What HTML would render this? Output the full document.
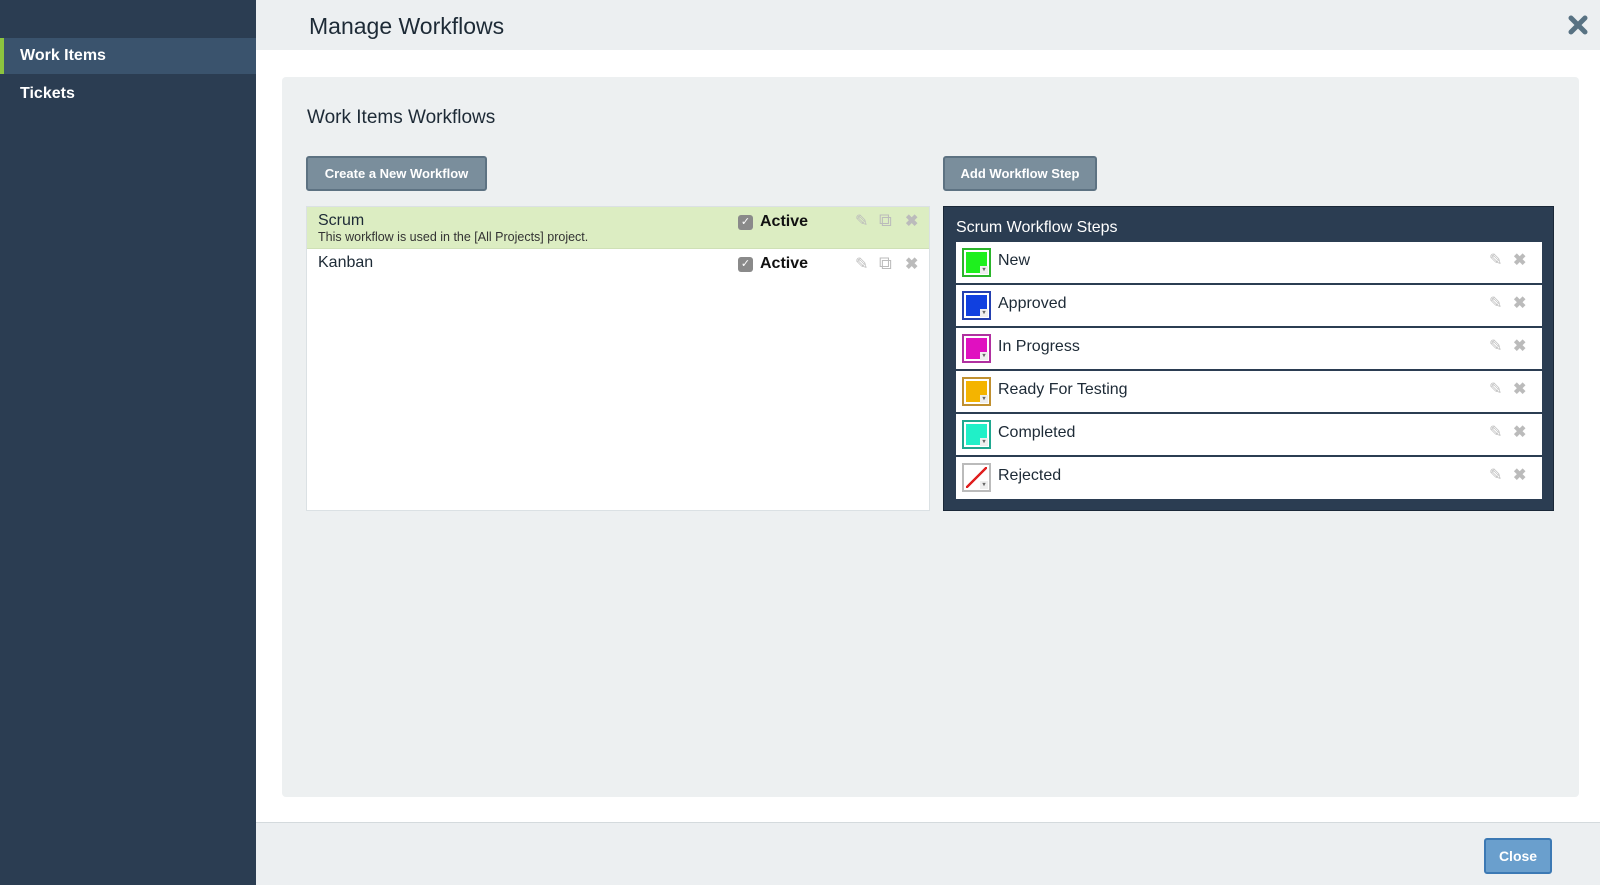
<!DOCTYPE html>
<html><head><meta charset="utf-8"><style>
*{box-sizing:border-box;margin:0;padding:0}
body{width:1600px;height:885px;overflow:hidden;font-family:"Liberation Sans",sans-serif;background:#fff;position:relative;color:#1d2a36}
.side{position:absolute;left:0;top:0;width:256px;height:885px;background:#2b3d52}
.side .it{position:absolute;left:0;width:256px;height:36px;line-height:36px;padding-left:20px;color:#fff;font-size:16px;font-weight:bold}
.side .act{background:#3a536d;border-left:4px solid #8cc43f;padding-left:16px}
.hdr{position:absolute;left:256px;top:0;width:1344px;height:50px;background:#eceff1}
.hdr h1{position:absolute;left:53px;top:13px;font-size:23px;font-weight:normal;color:#1d2a36}
.x{position:absolute;left:1568px;top:15px}
.panel{position:absolute;left:282px;top:77px;width:1297px;height:720px;background:#edf0f1;border-radius:4px}
.h2{position:absolute;left:307px;top:107px;font-size:19px;color:#1d2a36}
.btn{position:absolute;top:156px;height:35px;background:#7a8e9c;border:2px solid #5d7282;border-radius:3px;color:#fff;font-size:13px;font-weight:bold;text-align:center;line-height:31px}
.list{position:absolute;left:306px;top:206px;width:624px;height:305px;background:#fff;border:1px solid #dbe1e4}
.row{position:absolute;left:0;width:622px}
.row .n{position:absolute;left:11px;font-size:16px;color:#1d2a36}
.row .d{position:absolute;left:11px;top:23px;font-size:12.5px;color:#333}
.cb{position:absolute;left:431px;width:15px;height:15px;background:#8a8a8a;border-radius:3px;color:#fff;font-size:11px;line-height:15px;text-align:center}
.ac{position:absolute;left:453px;font-size:16px;font-weight:bold;color:#111}
.ic{position:absolute;color:#bbb;font-size:16px}
.dark{position:absolute;left:943px;top:206px;width:611px;height:305px;background:#2b3d52;border:1px solid #1a2838}
.dark .t{position:absolute;left:12px;top:12px;color:#fff;font-size:16px}
.step{position:absolute;left:12px;width:586px;height:42px;background:#fff;border-bottom:1px solid #2b3d52}
.sw{position:absolute;left:6px;top:6px;width:29px;height:29px;border:2px solid;padding:2px}
.sw i{display:block;width:100%;height:100%}
.sw b{position:absolute;right:1px;bottom:1px;width:8px;height:8px;background:#eee;font-size:6px;color:#666;line-height:8px;text-align:center}
.step .n{position:absolute;left:42px;top:10px;font-size:16px;color:#1d2a36}
.step .p{position:absolute;left:533px;top:8px;color:#bbb;font-size:16px}
.step .q{position:absolute;left:557px;top:8px;color:#bbb;font-size:16px;font-weight:bold}
.foot{position:absolute;left:256px;top:822px;width:1344px;height:63px;background:#eceff1;border-top:1px solid #d4dadd}
.close{position:absolute;left:1484px;top:838px;width:68px;height:36px;background:#6a9fcd;border:2px solid #3c79b4;border-radius:3px;color:#fff;font-weight:bold;font-size:14px;text-align:center;line-height:32px}
</style></head><body>
<div class="side">
<div class="it act" style="top:38px">Work Items</div>
<div class="it" style="top:76px">Tickets</div>
</div>
<div class="hdr"><h1>Manage Workflows</h1></div>
<svg class="x" width="20" height="20" viewBox="0 0 20 20"><path d="M3 3L17 17M17 3L3 17" stroke="#587283" stroke-width="5" stroke-linecap="round"/></svg>
<div class="panel"></div>
<div class="h2">Work Items Workflows</div>
<div class="btn" style="left:306px;width:181px">Create a New Workflow</div>
<div class="btn" style="left:943px;width:154px">Add Workflow Step</div>
<div class="list">
<div class="row" style="top:0;height:42px;background:#dcedc2;border-bottom:1px solid #cfe0b6">
<div class="n" style="top:5px">Scrum</div><div class="d">This workflow is used in the [All Projects] project.</div>
<div class="cb" style="top:8px">✓</div><div class="ac" style="top:6px">Active</div>
<div class="ic" style="left:548px;top:4px">✎</div><div class="ic" style="left:572px;top:3px;font-size:18px">⧉</div><div class="ic" style="left:598px;top:4px;font-weight:bold">✖</div>
</div>
<div class="row" style="top:42px;height:26px">
<div class="n" style="top:5px">Kanban</div>
<div class="cb" style="top:8px">✓</div><div class="ac" style="top:6px">Active</div>
<div class="ic" style="left:548px;top:5px">✎</div><div class="ic" style="left:572px;top:4px;font-size:18px">⧉</div><div class="ic" style="left:598px;top:5px;font-weight:bold">✖</div>
</div>
</div>
<div class="dark">
<div class="t">Scrum Workflow Steps</div>
<div class="step" style="top:35px"><div class="sw" style="border-color:#2bb52b"><i style="background:#1ef01e"></i><b>▾</b></div><div class="n">New</div><div class="p">✎</div><div class="q">✖</div></div>
<div class="step" style="top:78px"><div class="sw" style="border-color:#2440b0"><i style="background:#1040e0"></i><b>▾</b></div><div class="n">Approved</div><div class="p">✎</div><div class="q">✖</div></div>
<div class="step" style="top:121px"><div class="sw" style="border-color:#b030a0"><i style="background:#e010c0"></i><b>▾</b></div><div class="n">In Progress</div><div class="p">✎</div><div class="q">✖</div></div>
<div class="step" style="top:164px"><div class="sw" style="border-color:#c09030"><i style="background:#f4b400"></i><b>▾</b></div><div class="n">Ready For Testing</div><div class="p">✎</div><div class="q">✖</div></div>
<div class="step" style="top:207px"><div class="sw" style="border-color:#20a890"><i style="background:#20f0c8"></i><b>▾</b></div><div class="n">Completed</div><div class="p">✎</div><div class="q">✖</div></div>
<div class="step" style="top:250px;border-bottom:none"><div class="sw" style="border-color:#bbb"><i style="background:linear-gradient(135deg,#fff 46%,#e02020 46%,#e02020 54%,#fff 54%)"></i><b>▾</b></div><div class="n">Rejected</div><div class="p">✎</div><div class="q">✖</div></div>
</div>
<div class="foot"></div>
<div class="close">Close</div>
</body></html>
